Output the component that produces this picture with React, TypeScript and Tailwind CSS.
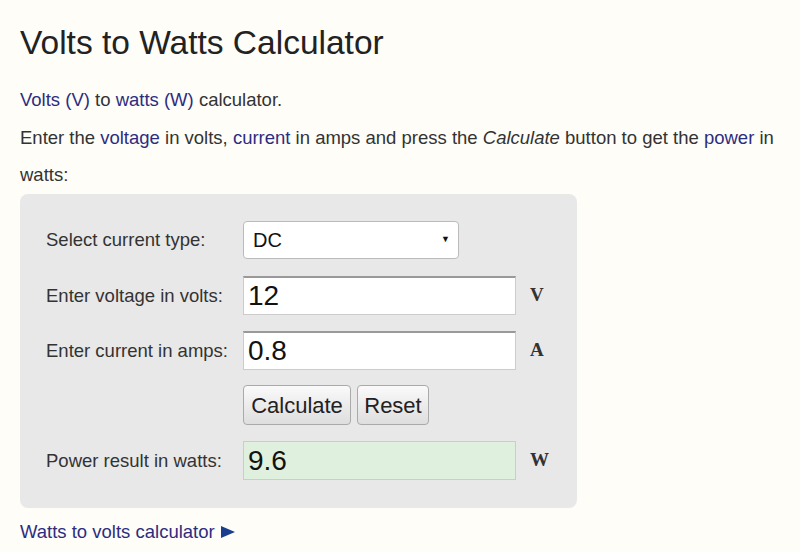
export default function App() {
  return (
    <div className="min-h-[552px] w-[800px] bg-[#fefdf8] px-5 pt-[21px] font-['Liberation_Sans',Arial,sans-serif] text-[#333]">
      <h1 className="text-[33.5px] leading-[44px] text-[#222]">Volts to Watts Calculator</h1>

      <p className="mt-[23px] text-[18.5px] leading-[24px]">
        <a className="text-[#2d2d80]">Volts (V)</a> to <a className="text-[#2d2d80]">watts (W)</a> calculator.
      </p>
      <p className="mt-[7px] text-[18.5px] leading-[37px]">
        Enter the <a className="text-[#2d2d80]">voltage</a> in volts, <a className="text-[#2d2d80]">current</a> in amps and press the <i>Calculate</i> button to get the <a className="text-[#2d2d80]">power</a> in watts:
      </p>

      <div className="mt-[1px] w-[557px] rounded-lg bg-[#e8e8e8] pb-[28px] pl-[26px] pt-[27px] text-[18.5px]">
        <div className="flex h-[38px] items-center">
          <label className="w-[197px]">Select current type:</label>
          <div className="flex h-[38px] w-[216px] items-center justify-between rounded-sm border border-[#bbb] bg-white pl-[9px] pr-[8px] text-[20px] text-[#111]">
            <span>DC</span>
            <span className="text-[9px]">▼</span>
          </div>
        </div>

        <div className="mt-[17px] flex h-[39px] items-center">
          <label className="w-[197px]">Enter voltage in volts:</label>
          <div className="flex h-[39px] w-[273px] items-center border border-[#ccc] border-t-2 border-t-[#999] bg-white pl-[4px] text-[28px] text-[#111]">12</div>
          <span className="ml-[14px] font-['Liberation_Serif',serif] text-[19px] font-bold text-[#333]">V</span>
        </div>

        <div className="mt-[16px] flex h-[39px] items-center">
          <label className="w-[197px]">Enter current in amps:</label>
          <div className="flex h-[39px] w-[273px] items-center border border-[#ccc] border-t-2 border-t-[#999] bg-white pl-[4px] text-[28px] text-[#111]">0.8</div>
          <span className="ml-[14px] font-['Liberation_Serif',serif] text-[19px] font-bold text-[#333]">A</span>
        </div>

        <div className="mt-[15px] flex h-[40px] items-center gap-[6px] pl-[197px]">
          <button className="h-[40px] w-[108px] rounded-sm border border-[#aaa] bg-gradient-to-b from-[#fafafa] to-[#dedede] text-[22px] text-[#222]">Calculate</button>
          <button className="h-[40px] w-[72px] rounded-sm border border-[#aaa] bg-gradient-to-b from-[#fafafa] to-[#dedede] text-[22px] text-[#222]">Reset</button>
        </div>

        <div className="mt-[16px] flex h-[39px] items-center">
          <label className="w-[197px]">Power result in watts:</label>
          <div className="flex h-[39px] w-[273px] items-center border border-[#ccc] bg-[#dff0df] pl-[4px] text-[28px] text-[#111]">9.6</div>
          <span className="ml-[14px] font-['Liberation_Serif',serif] text-[19px] font-bold text-[#333]">W</span>
        </div>
      </div>

      <p className="mt-[12px] flex items-center gap-[6px] text-[18.5px] leading-[24px] text-[#2d2d80]">
        <a>Watts to volts calculator</a>
        <svg width="14" height="12" viewBox="0 0 14 12" className="fill-[#1a3f8f]">
          <path d="M0 0 L14 6 L0 12 Z" />
        </svg>
      </p>
    </div>
  );
}
